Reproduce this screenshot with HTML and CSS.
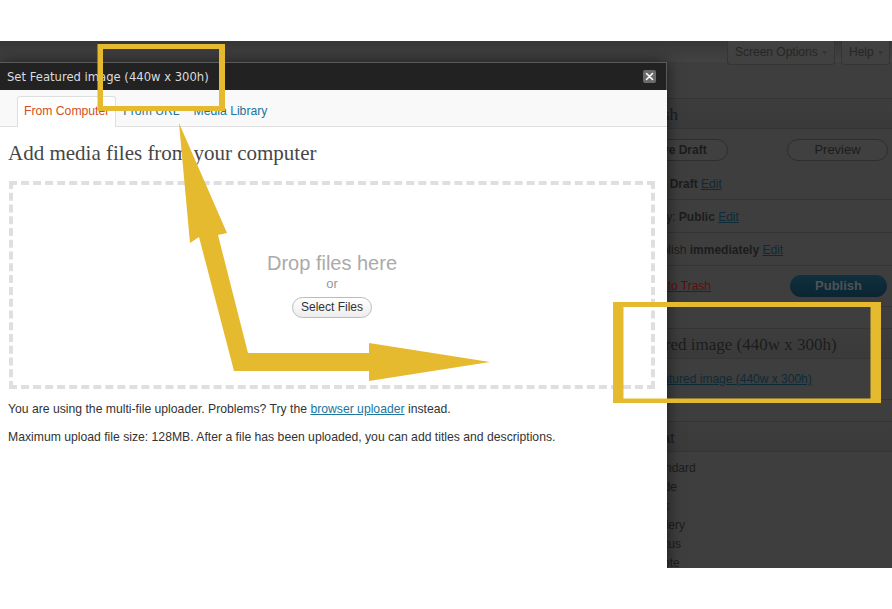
FILE: index.html
```html
<!DOCTYPE html>
<html lang="en">
  <head>
    <meta charset="UTF-8" />
    <meta name="viewport" content="width=device-width, initial-scale=1.0" />
    <title>Set Featured image</title>
    <link rel="stylesheet" href="styles.css">
  </head>
  <body>
    <div class="shot">
      <div class="band"></div>

      <div class="stage">
        <!-- dimmed edit screen behind the popup -->
        <div class="admin">
          <div class="screen-meta">
            <span class="meta-tab meta-options">Screen Options <i>&#9660;</i></span>
            <span class="meta-tab meta-help">Help <i>&#9660;</i></span>
          </div>

          <div class="side">
            <div class="box box-publish">
              <h3 class="box-title">Publish</h3>
              <div class="minor">
                <span class="pill pill-save">Save Draft</span>
                <span class="pill pill-preview">Preview</span>
              </div>
              <div class="row">Status: <b>Draft</b> <a>Edit</a></div>
              <div class="row">Visibility: <b>Public</b> <a>Edit</a></div>
              <div class="row row-date">Publish <b>immediately</b> <a>Edit</a></div>
              <div class="major">
                <a class="trash">Move to Trash</a>
                <span class="publish">Publish</span>
              </div>
            </div>

            <div class="box box-featured">
              <h3 class="box-title">Featured image (440w x 300h)</h3>
              <div class="featured-link"><a>Set featured image (440w x 300h)</a></div>
            </div>

            <div class="box box-format">
              <h3 class="box-title box-title-sans">Format</h3>
              <ul class="formats">
                <li>Standard</li>
                <li>Aside</li>
                <li>Link</li>
                <li>Gallery</li>
                <li>Status</li>
                <li>Quote</li>
              </ul>
            </div>
          </div>
        </div>

        <!-- popup -->
        <div class="modal">
          <div class="modal-bar">
            <span class="modal-title">Set Featured image (440w x 300h)</span>
            <span class="modal-close">
              <svg width="13" height="13" viewBox="0 0 13 13">
                <path d="M3.5 3.5 L9.5 9.5 M9.5 3.5 L3.5 9.5" stroke="#fff" stroke-width="1.6" stroke-linecap="round" />
              </svg>
            </span>
          </div>

          <div class="tabs">
            <span class="tab current">From Computer</span>
            <span class="tab">From URL</span>
            <span class="tab">Media Library</span>
          </div>

          <div class="modal-body">
            <h2 class="upload-title">Add media files from your computer</h2>

            <div class="dropzone">
              <div class="drop-text">Drop files here</div>
              <div class="drop-or">or</div>
              <span class="select-btn">Select Files</span>
            </div>

            <p class="note">You are using the multi-file uploader. Problems? Try the <a href="#">browser uploader</a> instead.</p>
            <p class="note">Maximum upload file size: 128MB. After a file has been uploaded, you can add titles and descriptions.</p>
          </div>
        </div>
      </div>

      <div class="band"></div>

      <!-- yellow markup drawn over the screenshot -->
      <svg class="marks" width="892" height="609" viewBox="0 0 892 609">
        <path fill="#e6ba2f" fill-rule="evenodd"
          d="M97.5 44 H225 V111 H97.5 Z M103 49 V106 H219 V49 Z" />
        <path fill="#e6ba2f" fill-rule="evenodd"
          d="M613 302 H881 V403 H613 Z M623.5 307 V398.5 H870.5 V307 Z" />
        <path fill="#e6ba2f"
          d="M179 123 L227 233 L218 235 L248 353 L369 353 L369 343 L490 362 L369 381 L369 371 L234 371 L199 237 L190 243 Z" />
      </svg>
    </div>
  </body>
</html>
```

FILE: styles.css
```css
* {
  box-sizing: border-box;
}
body {
  margin: 0;
  background: #fff;
  font-family: "Liberation Sans", Arial, sans-serif;
}
.shot {
  position: relative;
  width: 892px;
  height: 609px;
  overflow: hidden;
}
.band {
  height: 41px;
  background: #fff;
}
.stage {
  position: relative;
  height: 527px;
  overflow: hidden;
  background: #3e3e3e;
}

/* dimmed admin screen */
.admin {
  height: 100%;
  background: linear-gradient(#373737, #434343 21px, #3e3e3e 21px);
}
.screen-meta {
  display: flex;
  justify-content: flex-end;
  gap: 6px;
  height: 24px;
  padding-right: 2px;
}
.meta-tab {
  height: 24px;
  padding-left: 7px;
  border: 1px solid #353535;
  border-top: none;
  border-radius: 0 0 4px 4px;
  background: #414141;
  color: #262626;
  font-size: 12px;
  line-height: 22px;
}
.meta-tab i {
  font-style: normal;
  font-size: 7px;
  color: #333;
  vertical-align: 1px;
}
.meta-options {
  width: 108px;
}
.meta-help {
  width: 49px;
}
.side {
  width: 282px;
  margin: 33px 0 0 616px;
}
.box {
  border: 1px solid #353535;
  border-radius: 3px;
  background: #3e3e3e;
  margin-bottom: 20px;
}
.box-title {
  margin: 0;
  height: 30px;
  padding-left: 10px;
  border-bottom: 1px solid #353535;
  background: linear-gradient(#3d3d3d, #3a3a3a);
  color: #1c1c1c;
  font-family: "Liberation Serif", Georgia, serif;
  font-size: 17px;
  font-weight: normal;
  line-height: 31px;
}
.box-title-sans {
  font-family: "Liberation Sans", Arial, sans-serif;
  font-size: 15px;
}
.minor {
  display: flex;
  justify-content: space-between;
  padding: 10px 9px 6px;
}
.pill {
  height: 22px;
  border: 1px solid #2e2e2e;
  border-radius: 11px;
  background: #404040;
  color: #1c1c1c;
  font-size: 12px;
  line-height: 20px;
  text-align: center;
}
.pill-save {
  width: 102px;
  font-weight: bold;
}
.pill-preview {
  width: 101px;
  font-size: 13px;
}
.row {
  padding: 8px 0 6px 12px;
  border-bottom: 1px solid #353535;
  color: #1c1c1c;
  font-size: 12px;
  line-height: 18px;
}
.row a,
.featured-link a {
  color: #0e2a37;
  text-decoration: underline;
}
.row-date {
  padding-left: 30px;
}
.major {
  display: flex;
  justify-content: space-between;
  align-items: center;
  padding: 9px 10px 9px 18px;
}
.trash {
  color: #5e0c0c;
  font-size: 12px;
  text-decoration: underline;
}
.publish {
  width: 97px;
  height: 22px;
  border-radius: 11px;
  background: linear-gradient(#10303f, #0b2431);
  color: #4c5356;
  font-size: 13px;
  font-weight: bold;
  line-height: 22px;
  text-align: center;
}
.box-publish {
  margin-bottom: 21px;
}
.box-featured {
  margin-bottom: 21px;
}
.featured-link {
  padding: 12px 0 12px 14px;
  font-size: 12px;
  line-height: 16px;
}
.formats {
  list-style: none;
  margin: 0;
  padding: 7px 0 10px 30px;
  color: #1c1c1c;
  font-size: 12px;
  line-height: 19px;
}

/* popup */
.modal {
  position: absolute;
  left: 0;
  top: 21px;
  bottom: 0;
  width: 667px;
  background: #fff;
  box-shadow: 0 0 14px rgba(0, 0, 0, 0.6);
}
.modal-bar {
  display: flex;
  justify-content: space-between;
  align-items: center;
  height: 28px;
  padding: 0 10px 0 7px;
  border-top: 1px solid #5a5a5a;
  border-right: 1px solid #5a5a5a;
  background: #222;
}
.modal-title {
  color: #dcdcdc;
  font-family: "DejaVu Sans", Verdana, sans-serif;
  font-size: 11.6px;
}
.modal-close {
  display: flex;
  width: 13px;
  height: 13px;
  border-radius: 2px;
  background: #6b6b6b;
}
.tabs {
  display: flex;
  align-items: flex-end;
  height: 37px;
  padding-left: 17px;
  border-bottom: 1px solid #dfdfdf;
  background: #f9f9f9;
}
.tab {
  height: 31px;
  margin-bottom: -1px;
  padding: 0 6px;
  border: 1px solid transparent;
  border-bottom: none;
  color: #21759b;
  font-size: 12.2px;
  line-height: 28px;
}
.tab.current {
  border-color: #dfdfdf;
  border-radius: 3px 3px 0 0;
  background: #fff;
  color: #d54e21;
}
.modal-body {
  padding: 0 10px 0 8px;
}
.upload-title {
  margin: 13px 0 0;
  color: #464646;
  font-family: "Liberation Serif", Georgia, serif;
  font-size: 21px;
  font-weight: normal;
  line-height: 26px;
}
.dropzone {
  display: flex;
  flex-direction: column;
  align-items: center;
  justify-content: center;
  width: 646px;
  height: 208px;
  margin: 15px 0 0 1px;
  padding-bottom: 2px;
  border: 4px dashed #dfdfdf;
}
.drop-text {
  color: #aaa;
  font-size: 20px;
  line-height: 24px;
}
.drop-or {
  color: #999;
  font-size: 13px;
  line-height: 18px;
}
.select-btn {
  margin-top: 4px;
  height: 21px;
  padding: 0 8px;
  border: 1px solid #bbb;
  border-radius: 11px;
  background: linear-gradient(#fff, #ededed);
  color: #333;
  font-size: 12px;
  line-height: 19px;
}
.note {
  margin: 10px 0 0;
  color: #333;
  font-size: 12.2px;
  line-height: 18px;
}
.dropzone + .note {
  margin-top: 11px;
}
.note a {
  color: #21759b;
}

.marks {
  position: absolute;
  left: 0;
  top: 0;
  pointer-events: none;
}
```
